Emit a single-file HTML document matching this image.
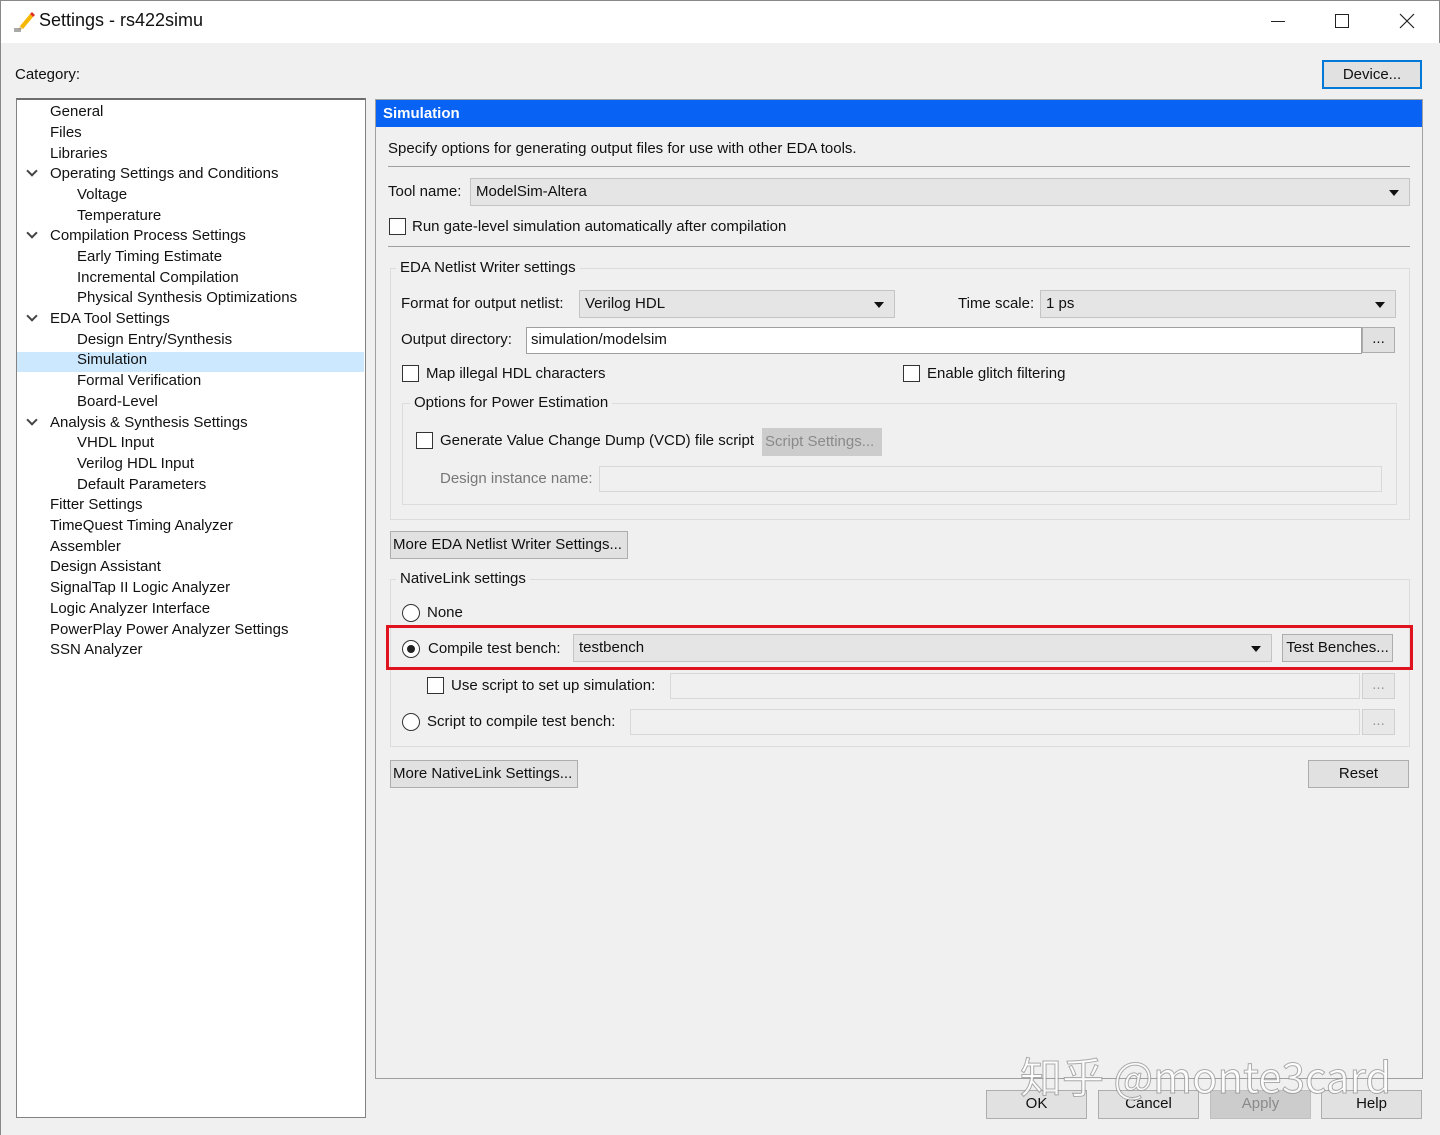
<!DOCTYPE html>
<html><head><meta charset="utf-8">
<style>
*{box-sizing:border-box;margin:0;padding:0}
body{width:1440px;height:1135px;background:#f0f0f0;font-family:"Liberation Sans","Noto Sans CJK SC",sans-serif;font-size:15px;color:#111;position:relative;overflow:hidden}
.a{position:absolute;white-space:nowrap}
.cb{position:absolute;width:17px;height:17px;border:1.5px solid #333;background:#fff}
.rb{position:absolute;width:18px;height:18px;border:1.5px solid #333;border-radius:50%;background:#fff}
.btn{position:absolute;border:1px solid #adadad;background:#e1e1e1;text-align:center;line-height:26px;font-size:15px}
.cmb{position:absolute;border:1px solid #c4c4c4;background:#e5e5e5;padding-left:5px;line-height:26px}
.cmb:after{content:"";position:absolute;right:10px;top:11px;border-left:5px solid transparent;border-right:5px solid transparent;border-top:6px solid #111}
.inp{position:absolute;border:1px solid #a0a0a0;background:#fff;padding-left:4px;line-height:24px}
.dis{position:absolute;border:1px solid #d8d8d8;background:#f0f0f0}
.grp{position:absolute;border:1px solid #dcdcdc}
.hl{position:absolute;height:1px;background:#a0a0a0}
.tree div{position:absolute;white-space:nowrap;height:20px;line-height:20px}
.chev{position:absolute;width:8px;height:8px;border-right:2px solid #444;border-bottom:2px solid #444;transform:rotate(45deg)}
</style></head><body>
<!-- title bar -->
<div class="a" style="left:0;top:0;width:1440px;height:43px;background:#fff;border:1px solid #888;border-bottom:none"></div>
<svg class="a" style="left:12px;top:10px" width="24" height="22" viewBox="0 0 24 22"><path d="M8 16 L18 4 L21 7 L11 19 Z" fill="#f5b800"/><path d="M18 4 L20 2 L23 5 L21 7 Z" fill="#e03020"/><path d="M8 16 L6 20 L11 19 Z" fill="#f0d090"/><path d="M2 19 H9 M2 21 H9" stroke="#777" stroke-width="1.2"/></svg>
<div class="a" style="left:39px;top:10px;font-size:18px">Settings - rs422simu</div>
<div class="a" style="left:1271px;top:21px;width:14px;height:1px;background:#222"></div>
<div class="a" style="left:1335px;top:14px;width:14px;height:14px;border:1.2px solid #222"></div>
<svg class="a" style="left:1399px;top:13px" width="16" height="16"><path d="M1 1 L15 15 M15 1 L1 15" stroke="#222" stroke-width="1.2"/></svg>
<div class="a" style="left:0;top:43px;width:1px;height:1092px;background:#888"></div>

<div class="a" style="left:15px;top:66px">Category:</div>
<div class="btn" style="left:1322px;top:60px;width:100px;height:29px;border:2px solid #0078d7;line-height:25px">Device...</div>

<!-- tree -->
<div class="a tree" style="left:16px;top:98px;width:350px;height:1020px;background:#fff;border:1px solid #828282;border-top:2px solid #6d6d6d">
<div style="left:0;top:252px;width:347px;background:#cce8ff"></div>
</div>
<div class="tree">
<div style="left:50px;top:102px">General</div>
<div style="left:50px;top:123px">Files</div>
<div style="left:50px;top:144px">Libraries</div>
<div style="left:50px;top:164px">Operating Settings and Conditions</div>
<div style="left:77px;top:185px">Voltage</div>
<div style="left:77px;top:206px">Temperature</div>
<div style="left:50px;top:226px">Compilation Process Settings</div>
<div style="left:77px;top:247px">Early Timing Estimate</div>
<div style="left:77px;top:268px">Incremental Compilation</div>
<div style="left:77px;top:288px">Physical Synthesis Optimizations</div>
<div style="left:50px;top:309px">EDA Tool Settings</div>
<div style="left:77px;top:330px">Design Entry/Synthesis</div>
<div style="left:77px;top:350px">Simulation</div>
<div style="left:77px;top:371px">Formal Verification</div>
<div style="left:77px;top:392px">Board-Level</div>
<div style="left:50px;top:413px">Analysis &amp; Synthesis Settings</div>
<div style="left:77px;top:433px">VHDL Input</div>
<div style="left:77px;top:454px">Verilog HDL Input</div>
<div style="left:77px;top:475px">Default Parameters</div>
<div style="left:50px;top:495px">Fitter Settings</div>
<div style="left:50px;top:516px">TimeQuest Timing Analyzer</div>
<div style="left:50px;top:537px">Assembler</div>
<div style="left:50px;top:557px">Design Assistant</div>
<div style="left:50px;top:578px">SignalTap II Logic Analyzer</div>
<div style="left:50px;top:599px">Logic Analyzer Interface</div>
<div style="left:50px;top:620px">PowerPlay Power Analyzer Settings</div>
<div style="left:50px;top:640px">SSN Analyzer</div>
</div>
<div class="chev" style="left:28px;top:167px"></div>
<div class="chev" style="left:28px;top:229px"></div>
<div class="chev" style="left:28px;top:312px"></div>
<div class="chev" style="left:28px;top:416px"></div>

<!-- right panel -->
<div class="a" style="left:375px;top:99px;width:1048px;height:980px;border:1px solid #a0a0a0"></div>
<div class="a" style="left:376px;top:100px;width:1046px;height:27px;background:#0863f5;color:#fff;font-weight:bold;padding-left:7px;line-height:27px;font-size:15px">Simulation</div>
<div class="a" style="left:388px;top:140px">Specify options for generating output files for use with other EDA tools.</div>
<div class="hl" style="left:388px;top:166px;width:1022px"></div>
<div class="a" style="left:388px;top:183px">Tool name:</div>
<div class="cmb" style="left:470px;top:178px;width:940px;height:28px">ModelSim-Altera</div>
<div class="cb" style="left:389px;top:218px"></div>
<div class="a" style="left:412px;top:218px">Run gate-level simulation automatically after compilation</div>
<div class="hl" style="left:388px;top:246px;width:1022px"></div>

<div class="grp" style="left:390px;top:268px;width:1020px;height:252px"></div>
<div class="a" style="left:396px;top:259px;background:#f0f0f0;padding:0 4px">EDA Netlist Writer settings</div>
<div class="a" style="left:401px;top:295px">Format for output netlist:</div>
<div class="cmb" style="left:579px;top:290px;width:316px;height:28px">Verilog HDL</div>
<div class="a" style="left:958px;top:295px">Time scale:</div>
<div class="cmb" style="left:1040px;top:290px;width:356px;height:28px">1 ps</div>
<div class="a" style="left:401px;top:331px">Output directory:</div>
<div class="inp" style="left:526px;top:327px;width:836px;height:27px">simulation/modelsim</div>
<div class="btn" style="left:1362px;top:327px;width:33px;height:26px;line-height:22px">...</div>
<div class="cb" style="left:402px;top:365px"></div>
<div class="a" style="left:426px;top:365px">Map illegal HDL characters</div>
<div class="cb" style="left:903px;top:365px"></div>
<div class="a" style="left:927px;top:365px">Enable glitch filtering</div>
<div class="grp" style="left:402px;top:403px;width:995px;height:102px"></div>
<div class="a" style="left:410px;top:394px;background:#f0f0f0;padding:0 4px">Options for Power Estimation</div>
<div class="cb" style="left:416px;top:432px"></div>
<div class="a" style="left:440px;top:432px">Generate Value Change Dump (VCD) file script</div>
<div class="a" style="left:762px;top:428px;width:120px;height:28px;background:#ccc;color:#8a8a8a;line-height:28px;padding-left:3px">Script Settings...</div>
<div class="a" style="left:440px;top:470px;color:#777">Design instance name:</div>
<div class="dis" style="left:599px;top:466px;width:783px;height:26px"></div>

<div class="btn" style="left:390px;top:531px;width:238px;height:28px;text-align:left;padding-left:2px">More EDA Netlist Writer Settings...</div>

<div class="grp" style="left:390px;top:579px;width:1020px;height:168px"></div>
<div class="a" style="left:396px;top:570px;background:#f0f0f0;padding:0 4px">NativeLink settings</div>
<div class="rb" style="left:402px;top:604px"></div>
<div class="a" style="left:427px;top:604px">None</div>
<div class="a" style="left:386px;top:625px;width:1027px;height:45px;border:3px solid #e0141e"></div>
<div class="rb" style="left:402px;top:640px"></div>
<div class="a" style="left:407px;top:645px;width:8px;height:8px;border-radius:50%;background:#222"></div>
<div class="a" style="left:428px;top:640px">Compile test bench:</div>
<div class="cmb" style="left:573px;top:634px;width:699px;height:28px">testbench</div>
<div class="btn" style="left:1282px;top:634px;width:111px;height:28px">Test Benches...</div>
<div class="cb" style="left:427px;top:677px"></div>
<div class="a" style="left:451px;top:677px">Use script to set up simulation:</div>
<div class="dis" style="left:670px;top:673px;width:690px;height:26px"></div>
<div class="a" style="left:1362px;top:673px;width:33px;height:26px;border:1px solid #d0d0d0;background:#e8e8e8;color:#999;text-align:center;line-height:22px">...</div>
<div class="rb" style="left:402px;top:713px"></div>
<div class="a" style="left:427px;top:713px">Script to compile test bench:</div>
<div class="dis" style="left:630px;top:709px;width:730px;height:26px"></div>
<div class="a" style="left:1362px;top:709px;width:33px;height:26px;border:1px solid #d0d0d0;background:#e8e8e8;color:#999;text-align:center;line-height:22px">...</div>

<div class="btn" style="left:390px;top:760px;width:188px;height:28px;text-align:left;padding-left:2px">More NativeLink Settings...</div>
<div class="btn" style="left:1308px;top:760px;width:101px;height:28px">Reset</div>

<!-- bottom buttons -->
<div class="btn" style="left:986px;top:1090px;width:101px;height:29px">OK</div>
<div class="btn" style="left:1098px;top:1090px;width:101px;height:29px">Cancel</div>
<div class="btn" style="left:1210px;top:1090px;width:101px;height:29px;background:#ccc;border-color:#bfbfbf;color:#8a8a8a">Apply</div>
<div class="btn" style="left:1321px;top:1090px;width:101px;height:29px">Help</div>
<div class="a" style="left:1020px;top:1048px;font-size:42px;color:rgba(255,255,255,0.85);-webkit-text-stroke:1px rgba(120,120,120,0.6);font-family:'Noto Sans CJK SC','Liberation Sans',sans-serif;line-height:56px">知乎 @monte3card</div>
</body></html>
